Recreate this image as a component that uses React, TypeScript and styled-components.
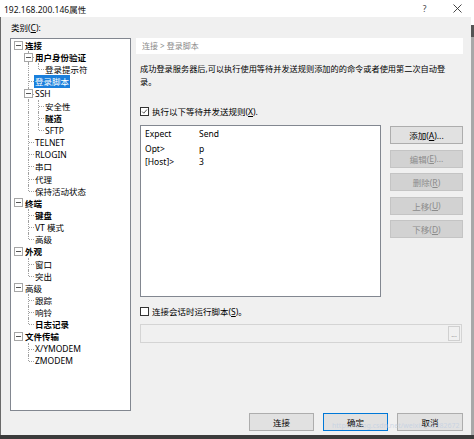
import React from "react";
import styled, { createGlobalStyle, css } from "styled-components";

type Node = {
    label: string;
    level: number;
    bold?: boolean;
    selected?: boolean;
    hasChildren?: boolean;
    last?: boolean;
    // ancestor levels (>=1) whose guide line keeps going past this row
    through?: number[];
};

const tree: Node[] = [
    { label: "连接", level: 0, bold: true, hasChildren: true },
    { label: "用户身份验证", level: 1, bold: true, hasChildren: true },
    { label: "登录提示符", level: 2, last: true, through: [1] },
    { label: "登录脚本", level: 1, selected: true },
    { label: "SSH", level: 1, hasChildren: true },
    { label: "安全性", level: 2, through: [1] },
    { label: "隧道", level: 2, bold: true, through: [1] },
    { label: "SFTP", level: 2, last: true, through: [1] },
    { label: "TELNET", level: 1 },
    { label: "RLOGIN", level: 1 },
    { label: "串口", level: 1 },
    { label: "代理", level: 1 },
    { label: "保持活动状态", level: 1, last: true },
    { label: "终端", level: 0, bold: true, hasChildren: true },
    { label: "键盘", level: 1, bold: true },
    { label: "VT 模式", level: 1 },
    { label: "高级", level: 1, last: true },
    { label: "外观", level: 0, bold: true, hasChildren: true },
    { label: "窗口", level: 1 },
    { label: "突出", level: 1, last: true },
    { label: "高级", level: 0, hasChildren: true },
    { label: "跟踪", level: 1 },
    { label: "响铃", level: 1 },
    { label: "日志记录", level: 1, bold: true, last: true },
    { label: "文件传输", level: 0, bold: true, hasChildren: true },
    { label: "X/YMODEM", level: 1 },
    { label: "ZMODEM", level: 1, last: true },
];

const rules = [
    { expect: "Expect", send: "Send" },
    { expect: "Opt>", send: "p" },
    { expect: "[Host]>", send: "3" },
];

const App: React.FC = () => {
    return (
        <>
            <GlobalStyle />
            <Page>
                <TitleBar>
                    <TitleText>192.168.200.146属性</TitleText>
                    <TitleButton>?</TitleButton>
                    <TitleButton>
                        <svg width="9" height="9" viewBox="0 0 9 9">
                            <path d="M0.5 0.5 L8.5 8.5 M8.5 0.5 L0.5 8.5" stroke="#333" strokeWidth="0.9" />
                        </svg>
                    </TitleButton>
                </TitleBar>
                <Middle>
                    <LeftEdge />
                    <Body>
                        <CategoryLabel>
                            类别(<u>C</u>):
                        </CategoryLabel>
                        <Main>
                            <Tree>
                                {tree.map((n, i) => (
                                    <TreeRow key={i}>
                                        {Array.from({ length: n.level + 1 }).map((_, k) => {
                                            if (k === n.level) {
                                                return (
                                                    <Cell
                                                        key={k}
                                                        $up={k > 0}
                                                        $down={k > 0 && !n.last}
                                                        $right={k > 0}
                                                    >
                                                        {n.hasChildren && <Toggle />}
                                                    </Cell>
                                                );
                                            }
                                            const through = k > 0 && (n.through || []).includes(k);
                                            return <Cell key={k} $up={through} $down={through} />;
                                        })}
                                        <TreeLabel $bold={n.bold} $selected={n.selected}>
                                            {n.label}
                                        </TreeLabel>
                                    </TreeRow>
                                ))}
                            </Tree>
                            <Panel>
                                <PathBar>连接 &gt; 登录脚本</PathBar>
                                <PanelContent>
                                    <Description>
                                        成功登录服务器后,可以执行使用等待并发送规则添加的的命令或者使用第二次自动登
                                        <br />
                                        录。
                                    </Description>
                                    <CheckRow $top={16}>
                                        <CheckBox>
                                            <svg width="9" height="9" viewBox="0 0 9 9">
                                                <path d="M1.5 4.6 L3.6 6.7 L7.6 2" fill="none" stroke="#222" strokeWidth="1" />
                                            </svg>
                                        </CheckBox>
                                        <span>
                                            执行以下等待并发送规则(<u>X</u>).
                                        </span>
                                    </CheckRow>
                                    <ListArea>
                                        <RuleList>
                                            {rules.map((r, i) => (
                                                <RuleRow key={i} $header={i === 0}>
                                                    <span>{r.expect}</span>
                                                    <span>{r.send}</span>
                                                </RuleRow>
                                            ))}
                                        </RuleList>
                                        <SideButtons>
                                            <SideButton>
                                                添加(<u>A</u>)...
                                            </SideButton>
                                            <SideButton $disabled>
                                                编辑(<u>E</u>)...
                                            </SideButton>
                                            <SideButton $disabled>
                                                删除(<u>R</u>)
                                            </SideButton>
                                            <SideButton $disabled>
                                                上移(<u>U</u>)
                                            </SideButton>
                                            <SideButton $disabled>
                                                下移(<u>D</u>)
                                            </SideButton>
                                        </SideButtons>
                                    </ListArea>
                                    <CheckRow $top={7}>
                                        <CheckBox />
                                        <span>
                                            连接会话时运行脚本(<u>S</u>)。
                                        </span>
                                    </CheckRow>
                                    <ScriptInput>
                                        <BrowseButton>...</BrowseButton>
                                    </ScriptInput>
                                </PanelContent>
                            </Panel>
                        </Main>
                        <Footer>
                            <FooterButton>连接</FooterButton>
                            <FooterButton $primary>确定</FooterButton>
                            <FooterButton $wide>取消</FooterButton>
                        </Footer>
                    </Body>
                    <RightEdge />
                </Middle>
                <BottomStrip />
                <Watermark>https://blog.csdn.net/weixin_42382672</Watermark>
            </Page>
        </>
    );
};

const GlobalStyle = createGlobalStyle`
    html, body {
        margin: 0;
        padding: 0;
    }
    body {
        width: 474px;
        height: 439px;
        overflow: hidden;
        background: #f0f0f0;
        font-family: "Segoe UI", "Noto Sans", "Noto Sans CJK SC", sans-serif;
        font-size: 8.5px;
        color: #000;
    }
    * {
        box-sizing: border-box;
    }
    u {
        text-decoration-thickness: 1px;
        text-underline-offset: 1px;
    }
`;

const Page = styled.div`
    position: relative;
    width: 474px;
    height: 439px;
    display: flex;
    flex-direction: column;
    overflow: hidden;
`;

const TitleBar = styled.div`
    height: 17px;
    flex: none;
    display: flex;
    align-items: center;
    background: #fff;
    padding-left: 4px;
    color: #111;
`;

const TitleText = styled.span`
    flex: 1;
    font-size: 8.5px;
`;

const TitleButton = styled.span`
    width: 33px;
    height: 17px;
    display: flex;
    align-items: center;
    justify-content: center;
    color: #444;
    font-size: 8.5px;
`;

const Middle = styled.div`
    flex: 1;
    display: flex;
    min-height: 0;
`;

const LeftEdge = styled.div`
    width: 1px;
    background: #6a6a6a;
`;

const RightEdge = styled.div`
    width: 3px;
    background: linear-gradient(to bottom, #fff 0, #fff 8px, #555 8px, #555 20px, #a8a8a8 20px);
`;

const Body = styled.div`
    flex: 1;
    display: flex;
    flex-direction: column;
    padding: 5px 8px 4px 9px;
    background: #f0f0f0;
`;

const CategoryLabel = styled.div`
    height: 12px;
    line-height: 12px;
    margin-bottom: 4px;
    padding-left: 1px;
`;

const Main = styled.div`
    display: flex;
    gap: 5px;
    height: 373px;
`;

const Tree = styled.div`
    width: 121px;
    flex: none;
    background: #fff;
    border: 1px solid #828790;
    padding: 0 0 0 2px;
    overflow: hidden;
`;

const TreeRow = styled.div`
    height: 12.15px;
    display: flex;
    align-items: stretch;
`;

const Cell = styled.div<{ $up?: boolean; $down?: boolean; $right?: boolean }>`
    position: relative;
    width: 10px;
    flex: none;
    ${({ $up, $down }) =>
        ($up || $down) &&
        css`
            &::before {
                content: "";
                position: absolute;
                left: 5px;
                top: ${$up ? "0" : "50%"};
                bottom: ${$down ? "0" : "50%"};
                border-left: 1px dotted #a0a0a0;
            }
        `}
    ${({ $right }) =>
        $right &&
        css`
            &::after {
                content: "";
                position: absolute;
                left: 6px;
                right: -1px;
                top: 50%;
                border-top: 1px dotted #a0a0a0;
            }
        `}
`;

const Toggle = styled.span`
    position: absolute;
    left: 1px;
    top: 50%;
    width: 9px;
    height: 9px;
    margin-top: -4.5px;
    background: #fff;
    border: 1px solid #a6a6a6;
    z-index: 1;
    &::after {
        content: "";
        position: absolute;
        left: 1px;
        right: 1px;
        top: 3px;
        border-top: 1px solid #555;
    }
`;

const TreeLabel = styled.span<{ $bold?: boolean; $selected?: boolean }>`
    display: flex;
    align-items: center;
    margin-left: 1px;
    padding: 0 1px;
    white-space: nowrap;
    font-weight: ${({ $bold }) => ($bold ? 700 : 400)};
    background: ${({ $selected }) => ($selected ? "#1a7fdc" : "transparent")};
    color: ${({ $selected }) => ($selected ? "#fff" : "#000")};
`;

const Panel = styled.div`
    flex: 1;
    display: flex;
    flex-direction: column;
`;

const PathBar = styled.div`
    height: 16px;
    line-height: 16px;
    background: #fff;
    padding-left: 6px;
    color: #8a8a8a;
    font-size: 8px;
`;

const PanelContent = styled.div`
    display: flex;
    flex-direction: column;
    padding-left: 4px;
`;

const Description = styled.div`
    margin-top: 8px;
    line-height: 13px;
    font-size: 8.2px;
    white-space: nowrap;
`;

const CheckRow = styled.div<{ $top: number }>`
    margin-top: ${({ $top }) => $top}px;
    height: 14px;
    display: flex;
    align-items: center;
    gap: 3px;
`;

const CheckBox = styled.span`
    width: 9px;
    height: 9px;
    flex: none;
    border: 1px solid #333;
    background: #fff;
    display: flex;
    align-items: center;
    justify-content: center;
    svg {
        display: block;
    }
`;

const ListArea = styled.div`
    margin-top: 7px;
    height: 172px;
    display: flex;
    gap: 9px;
`;

const RuleList = styled.div`
    width: 241px;
    background: #fff;
    border: 1px solid #828790;
    padding: 1px 0 0 4px;
`;

const RuleRow = styled.div<{ $header?: boolean }>`
    display: grid;
    grid-template-columns: 54px 1fr;
    line-height: 13px;
    margin-bottom: ${({ $header }) => ($header ? 2 : 0)}px;
`;

const SideButtons = styled.div`
    width: 73px;
    display: flex;
    flex-direction: column;
    gap: 5.6px;
    padding-top: 1px;
`;

const SideButton = styled.div<{ $disabled?: boolean }>`
    height: 18px;
    display: flex;
    align-items: center;
    justify-content: center;
    border: 1px solid ${({ $disabled }) => ($disabled ? "#c4c4c4" : "#adadad")};
    background: ${({ $disabled }) => ($disabled ? "#d2d2d2" : "#e1e1e1")};
    color: ${({ $disabled }) => ($disabled ? "#8c8c8c" : "#000")};
`;

const ScriptInput = styled.div`
    margin-top: 6px;
    width: 322px;
    height: 19px;
    border: 1px solid #d4d4d4;
    background: #f0f0f0;
    display: flex;
    justify-content: flex-end;
    padding: 1px;
`;

const BrowseButton = styled.div`
    width: 12px;
    border: 1px solid #d0d0d0;
    background: #f0f0f0;
    color: #9a9a9a;
    font-size: 7px;
    line-height: 7px;
    display: flex;
    align-items: flex-end;
    justify-content: center;
    padding-bottom: 2px;
`;

const Footer = styled.div`
    margin-top: 2px;
    height: 18px;
    display: flex;
    justify-content: flex-end;
    gap: 9px;
`;

const FooterButton = styled.div<{ $primary?: boolean; $wide?: boolean }>`
    width: ${({ $wide }) => ($wide ? 66 : 65)}px;
    height: 18px;
    display: flex;
    align-items: center;
    justify-content: center;
    background: #e1e1e1;
    border: 1px solid ${({ $primary }) => ($primary ? "#0078d7" : "#adadad")};
`;

const BottomStrip = styled.div`
    height: 4px;
    flex: none;
    background: #3b3b3b;
`;

const Watermark = styled.div`
    position: absolute;
    left: 332px;
    top: 421px;
    font-size: 7px;
    color: rgba(190, 205, 225, 0.7);
    white-space: nowrap;
    pointer-events: none;
`;

export default App;
